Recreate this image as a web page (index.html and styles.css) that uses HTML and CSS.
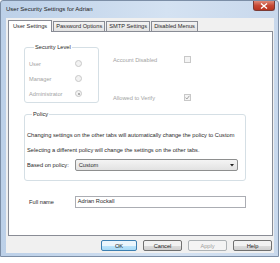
FILE: index.html
```html
<!DOCTYPE html>
<html lang="en">
<head>
    <meta charset="UTF-8">
    <title>User Security Settings for Adrian</title>
    <link rel="stylesheet" href="styles.css">
</head>
<body>
    <div class="window">
        <div class="titlebar">
            <span class="title">User Security Settings for Adrian</span>
            <span class="close">
                <svg width="8" height="6" viewBox="0 0 8 6"><path d="M1 0.5 L7 5.5 M7 0.5 L1 5.5" stroke="#fff" stroke-width="1.4"/></svg>
            </span>
        </div>

        <div class="client">
            <div class="tabs">
                <div class="tab active">User Settings</div>
                <div class="tab">Password Options</div>
                <div class="tab">SMTP Settings</div>
                <div class="tab">Disabled Menus</div>
            </div>

            <div class="panel">
                <div class="top-row">
                    <div class="group security">
                        <span class="legend">Security Level</span>
                        <div class="radio-row"><span class="muted">User</span><span class="radio"></span></div>
                        <div class="radio-row"><span class="muted">Manager</span><span class="radio"></span></div>
                        <div class="radio-row"><span class="muted">Administrator</span><span class="radio checked"></span></div>
                    </div>

                    <div class="flags">
                        <div class="flag-row"><span class="muted">Account Disabled</span><span class="check"></span></div>
                        <div class="flag-row"><span class="muted">Allowed to Verify</span>
                            <span class="check">
                                <svg width="5" height="5" viewBox="0 0 5 5"><path d="M0.6 2.6 L1.9 4 L4.4 0.8" stroke="#9a9a9a" stroke-width="0.9" fill="none"/></svg>
                            </span>
                        </div>
                    </div>
                </div>

                <div class="group policy">
                    <span class="legend">Policy</span>
                    <p class="note">Changing settings on the other tabs will automatically change the policy to Custom</p>
                    <p class="note">Selecting a different policy will change the settings on the other tabs.</p>
                    <div class="policy-row">
                        <span>Based on policy:</span>
                        <div class="select">
                            <span>Custom</span>
                            <svg width="4" height="3" viewBox="0 0 4 3"><path d="M0 0 L4 0 L2 2.5 Z" fill="#222"/></svg>
                        </div>
                    </div>
                </div>

                <div class="name-row">
                    <span class="name-label">Full name</span>
                    <div class="input">Adrian Rockall</div>
                </div>
            </div>

            <div class="buttons">
                <button class="btn default">OK</button>
                <button class="btn">Cancel</button>
                <button class="btn disabled">Apply</button>
                <button class="btn">Help</button>
            </div>
        </div>
    </div>
</body>
</html>
```

FILE: styles.css
```css
body {
    margin: 0;
    background-color: #ffffff;
    font-family: "Liberation Sans", Arial, sans-serif;
    font-size: 5.7px;
    color: #2a2a2a;
}
.window {
    box-sizing: border-box;
    width: 279px;
    height: 257px;
    border: 1px solid #7c8ea6;
    border-radius: 3px 3px 0 0;
    background: linear-gradient(to right, #bcd0e8, #d4e2f2 60%, #c8d8ec);
    padding: 0 4px 4px 5px;
}
.titlebar {
    height: 17px;
    display: flex;
    align-items: flex-start;
    justify-content: space-between;
}
.title {
    margin-top: 5px;
    font-size: 6px;
    color: #1a1a1a;
}
.close {
    width: 20px;
    height: 9px;
    margin-right: -1px;
    border: 1px solid #7a3a34;
    border-top: none;
    border-radius: 0 0 3px 3px;
    background: linear-gradient(#e08a78, #c74a36 50%, #b8331f);
    display: flex;
    align-items: center;
    justify-content: center;
}
.client {
    background-color: #f0f0f0;
    height: 235px;
    padding: 2px 1px 0 2px;
    box-sizing: border-box;
}
.tabs {
    display: flex;
    align-items: flex-end;
    height: 11px;
    padding-left: 2px;
}
.tab {
    height: 9px;
    line-height: 9px;
    padding: 0 2px;
    margin-right: 1px;
    border: 1px solid #898c95;
    border-bottom: none;
    background: linear-gradient(#f3f3f3, #e3e3e3);
    white-space: nowrap;
}
.tab.active {
    height: 11px;
    line-height: 10px;
    margin-left: -2px;
    margin-bottom: -1px;
    padding: 0 4px;
    background: #ffffff;
    position: relative;
}
.panel {
    height: 205px;
    box-sizing: border-box;
    border: 1px solid #898c95;
    background-color: #ffffff;
    padding: 15px 26px 0 15px;
}
.top-row {
    display: flex;
    align-items: flex-start;
    height: 56px;
}
.group {
    border: 1px solid #d5dfe5;
    border-radius: 3px;
}
.legend {
    display: inline-block;
    background: #ffffff;
    padding: 0 1px;
    margin-left: 5px;
    margin-top: -4px;
    line-height: 7px;
    vertical-align: top;
}
.security {
    width: 75px;
    height: 56px;
    box-sizing: border-box;
    padding-left: 4px;
}
.security .legend + .radio-row {
    margin-top: 2px;
}
.radio-row {
    display: flex;
    align-items: center;
    height: 15px;
    width: 53px;
    justify-content: space-between;
}
.muted {
    color: #a3a3a3;
}
.radio {
    width: 5px;
    height: 5px;
    border: 1px solid #c8c8c8;
    border-radius: 50%;
    background: #f2f2f2;
    position: relative;
}
.radio.checked::after {
    content: "";
    position: absolute;
    left: 1.5px;
    top: 1.5px;
    width: 2px;
    height: 2px;
    border-radius: 50%;
    background: #9a9a9a;
}
.flags {
    margin-left: 14px;
    margin-top: 9px;
    width: 78px;
}
.flag-row {
    display: flex;
    align-items: center;
    justify-content: space-between;
    height: 7px;
}
.flag-row + .flag-row {
    margin-top: 31px;
}
.check {
    width: 5px;
    height: 5px;
    border: 1px solid #c8c8c8;
    background: #f4f4f4;
    display: flex;
    align-items: center;
    justify-content: center;
}
.policy {
    margin-top: 11px;
    width: 222px;
    height: 67px;
    box-sizing: border-box;
    padding-left: 2px;
}
.note {
    margin: 0;
    line-height: 7px;
    white-space: nowrap;
}
.policy .legend + .note {
    margin-top: 11px;
}
.note + .note {
    margin-top: 8px;
}
.policy-row {
    display: flex;
    align-items: center;
    margin-top: 5px;
}
.select {
    margin-left: 6px;
    width: 163px;
    height: 12px;
    box-sizing: border-box;
    border: 1px solid #8e8f8f;
    border-radius: 2px;
    background: linear-gradient(#f4f4f4, #e2e2e2);
    display: flex;
    align-items: center;
    justify-content: space-between;
    padding: 0 3px;
}
.name-row {
    display: flex;
    align-items: center;
    margin-top: 15px;
    padding-left: 5px;
}
.name-label {
    width: 46px;
}
.input {
    width: 172px;
    height: 12px;
    box-sizing: border-box;
    border: 1px solid #abadb3;
    line-height: 9px;
    padding-left: 2px;
}
.buttons {
    display: flex;
    justify-content: flex-end;
    gap: 6px;
    margin-top: 4px;
    margin-right: 1px;
}
.btn {
    font-family: "Liberation Sans", Arial, sans-serif;
    font-size: 5.7px;
    color: #1e1e1e;
    width: 39px;
    height: 11px;
    padding: 0;
    border: 1px solid #707070;
    border-radius: 2px;
    background: linear-gradient(#f2f2f2 50%, #dddddd 50%, #cfcfcf);
}
.btn.default {
    width: 36px;
    border-color: #3c7fb1;
    background: linear-gradient(#eaf6fd 50%, #bee6fd 50%, #a7d9f5);
}
.btn.disabled {
    color: #a0a0a0;
    border-color: #adb2b5;
    background: #f4f4f4;
}
```
